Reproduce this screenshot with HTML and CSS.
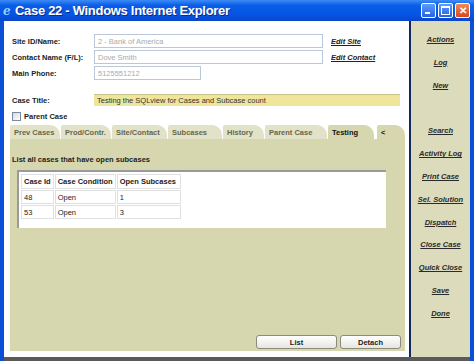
FILE: index.html
```html
<!DOCTYPE html>
<html>

<head>
  <title>Case 22 - Windows Internet Explorer</title>
  <link rel="stylesheet" href="styles.css">
</head>

<body>
  <div class="window">
    <div class="titlebar">
      <span class="ie-icon">e</span>
      <span class="title">Case 22 - Windows Internet Explorer</span>
      <div class="controls">
        <span class="ctl ctl-min"><i></i></span>
        <span class="ctl ctl-max"><i></i></span>
        <span class="ctl ctl-close">&#x2715;</span>
      </div>
    </div>

    <div class="frame">
      <div class="main">
        <div class="form-row">
          <label>Site ID/Name:</label>
          <input type="text" class="field wide" value="2 - Bank of America" disabled>
          <a href="#" class="edit-link">Edit Site</a>
        </div>
        <div class="form-row">
          <label>Contact Name (F/L):</label>
          <input type="text" class="field wide" value="Dove Smith" disabled>
          <a href="#" class="edit-link">Edit Contact</a>
        </div>
        <div class="form-row">
          <label>Main Phone:</label>
          <input type="text" class="field short" value="5125551212" disabled>
        </div>

        <div class="form-row title-row">
          <label>Case Title:</label>
          <input type="text" class="field case-title" value="Testing the SQLview for Cases and Subcase count">
        </div>

        <div class="parent-row">
          <span class="checkbox"></span>
          <span>Parent Case</span>
        </div>

        <div class="tabs">
          <span class="tab t-prev">Prev Cases</span>
          <span class="tab t-prod">Prod/Contr.</span>
          <span class="tab t-site">Site/Contact</span>
          <span class="tab t-sub">Subcases</span>
          <span class="tab t-hist">History</span>
          <span class="tab t-parent">Parent Case</span>
          <span class="tab t-test active">Testing</span>
          <span class="tab arrow">&lt;</span>
        </div>

        <div class="panel">
          <div class="panel-title">List all cases that have open subcases</div>
          <div class="grid-box">
            <table>
              <tr>
                <th class="c-id">Case Id</th>
                <th class="c-cond">Case Condition</th>
                <th class="c-open">Open Subcases</th>
              </tr>
              <tr>
                <td>48</td>
                <td>Open</td>
                <td>1</td>
              </tr>
              <tr>
                <td>53</td>
                <td>Open</td>
                <td>3</td>
              </tr>
            </table>
          </div>
          <div class="panel-buttons">
            <button type="button" class="btn-list">List</button>
            <button type="button" class="btn-detach">Detach</button>
          </div>
        </div>
      </div>

      <div class="sidebar">
        <a href="#">Actions</a>
        <a href="#">Log</a>
        <a href="#">New</a>
        <a href="#" class="gap">Search</a>
        <a href="#">Activity Log</a>
        <a href="#">Print Case</a>
        <a href="#">Sel. Solution</a>
        <a href="#">Dispatch</a>
        <a href="#">Close Case</a>
        <a href="#">Quick Close</a>
        <a href="#">Save</a>
        <a href="#">Done</a>
      </div>
    </div>
  </div>
</body>

</html>
```

FILE: styles.css
```css
body {
  margin: 0;
  padding: 0;
  font-family: 'Liberation Sans', Arial, sans-serif;
  background-color: #fff;
}

.window {
  width: 474px;
  height: 361px;
  display: flex;
  flex-direction: column;
  background-color: #0a4fd6;
  box-sizing: border-box;
}

/* Title bar */
.titlebar {
  height: 21px;
  display: flex;
  align-items: center;
  padding: 0 4px 0 3px;
  background: linear-gradient(#3d8cf7 0%, #0a5ee8 25%, #0553e2 75%, #0a46c6 100%);
  color: #fff;
}

.ie-icon {
  width: 10px;
  font-size: 12px;
  font-weight: bold;
  color: #8fd0ff;
  font-style: italic;
  font-family: 'DejaVu Serif', serif;
}

.title {
  margin-left: 2px;
  font-weight: bold;
  font-size: 13px;
  letter-spacing: -0.3px;
  text-shadow: 1px 1px 0 #0a2a8a;
}

.controls {
  margin-left: auto;
  display: flex;
  gap: 2px;
}

.ctl {
  width: 15px;
  height: 15px;
  box-sizing: border-box;
  border: 1px solid #fff;
  border-radius: 2px;
  background: linear-gradient(#5c9cff, #2463e6);
  position: relative;
  display: flex;
  align-items: center;
  justify-content: center;
}

.ctl-min i {
  position: absolute;
  left: 3px;
  bottom: 3px;
  width: 5px;
  height: 2px;
  background-color: #fff;
}

.ctl-max i {
  width: 7px;
  height: 6px;
  border: 1px solid #fff;
  border-top-width: 2px;
}

.ctl-close {
  background: linear-gradient(#f08a5c, #d9461c);
  color: #fff;
  font-size: 10px;
  font-weight: bold;
}

/* Frame below title */
.frame {
  flex: 1;
  display: flex;
  margin: 0 4px 0 4px;
  border-bottom: 4px solid #5a5a5a;
}

.main {
  flex: 1;
  background-color: #fff;
  padding: 13px 2px 4px 6px;
  font-size: 7.5px;
  color: #222;
}

.form-row {
  display: flex;
  align-items: center;
  height: 14px;
  margin-bottom: 2px;
}

.form-row label {
  width: 82px;
  font-weight: bold;
  padding-left: 2px;
}

.field {
  height: 14px;
  box-sizing: border-box;
  border: 1px solid #b9c7d8;
  background-color: #fff;
  font-family: 'Liberation Sans', Arial, sans-serif;
  font-size: 7.5px;
  color: #aaa;
  padding: 0 3px;
}

.field.wide {
  width: 229px;
}

.field.short {
  width: 107px;
}

.edit-link {
  margin-left: 8px;
  font-weight: bold;
  font-style: italic;
  color: #222;
}

.title-row {
  margin-top: 14px;
  height: 12px;
}

.field.case-title {
  width: 306px;
  height: 12px;
  border: none;
  border-top: 1px solid #c9c28a;
  background-color: #efe69c;
  color: #333;
}

.parent-row {
  display: flex;
  align-items: center;
  gap: 3px;
  margin-top: 6px;
  font-weight: bold;
  padding-left: 2px;
}

.checkbox {
  width: 9px;
  height: 9px;
  box-sizing: border-box;
  border: 1px solid #7a8aa0;
  background: linear-gradient(135deg, #dcdcd4, #fff);
}

/* Tabs */
.tabs {
  display: flex;
  margin-top: 4px;
  height: 14px;
  margin-right: 2px;
}

.tab {
  display: flex;
  align-items: center;
  box-sizing: border-box;
  padding-left: 4px;
  margin-right: 1px;
  white-space: nowrap;
  font-weight: bold;
  color: #66664a;
  background-color: #e2e2c8;
  border-top-right-radius: 10px;
  border-top-left-radius: 2px;
}

.t-prev { width: 50px; }
.t-prod { width: 50px; }
.t-site { width: 55px; }
.t-sub { width: 54px; }
.t-hist { width: 41px; }
.t-parent { width: 62px; }

.tab.active {
  width: 46px;
  background-color: #d6d7ae;
  color: #111;
  margin-right: 3px;
}

.tab.arrow {
  color: #111;
  flex: 1;
  margin-right: 0;
  background-color: #d6d7ae;
}

.panel {
  background-color: #d6d7ae;
  height: 212px;
  margin-right: 2px;
  display: flex;
  flex-direction: column;
  padding: 0 3px 0 2px;
}

.panel-title {
  font-weight: bold;
  margin-top: 16px;
}

.grid-box {
  margin: 6px 16px 0 5px;
  height: 58px;
  box-sizing: border-box;
  background-color: #fff;
  border-top: 2px solid #9a9a9a;
  border-left: 2px solid #9a9a9a;
  padding: 1px 0 0 1px;
}

table {
  border-collapse: separate;
  border-spacing: 1px;
  font-size: 7.5px;
}

th,
td {
  border: 1px solid #e0e0e0;
  height: 14px;
  padding: 0 2px;
  text-align: left;
  white-space: nowrap;
  box-sizing: border-box;
}

th {
  font-weight: bold;
  height: 15px;
}

.c-id { width: 32px; }
.c-cond { width: 60px; }
.c-open { width: 64px; }

.panel-buttons {
  margin-top: auto;
  margin-bottom: 2px;
  display: flex;
  justify-content: flex-end;
  gap: 3px;
  padding-right: 1px;
}

.panel-buttons button {
  height: 14px;
  font-family: 'Liberation Sans', Arial, sans-serif;
  font-size: 7.5px;
  font-weight: bold;
  color: #222;
  background: linear-gradient(#ffffff, #e6e6e0);
  border: 1px solid #8a8a80;
  border-radius: 3px;
}

.btn-list {
  width: 81px;
}

.btn-detach {
  width: 61px;
}

/* Right side action bar */
.sidebar {
  width: 59px;
  background-color: #dcdcbc;
  border-left: 2px solid #102a5c;
  display: flex;
  flex-direction: column;
  align-items: center;
  padding-top: 14px;
}

.sidebar a {
  font-size: 7.5px;
  font-weight: bold;
  font-style: italic;
  color: #2a2a2a;
  height: 22.8px;
}

.sidebar a.gap {
  margin-top: 23px;
}
```
